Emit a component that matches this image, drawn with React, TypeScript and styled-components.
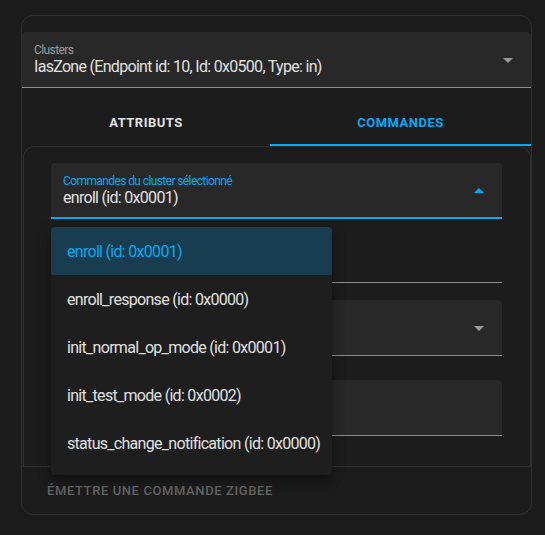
import React from "react";
import styled, {createGlobalStyle} from "styled-components";

const Global = createGlobalStyle`
  body {
    margin: 0;
    background: #1c1c1c;
    font-family: Roboto, "Noto Sans", sans-serif;
    color: #e1e1e1;
  }
`

const Page = styled.div`
  padding: 15px 13px 20px 21px;
`

const Card = styled.div`
  width: 511px;
  box-sizing: border-box;
  border: 1px solid #2f2f2f;
  border-radius: 12px;
  background: #1c1c1c;
  padding-top: 16px;
`

const Field = styled.div<{filled?: boolean; focused?: boolean; top?: number}>`
  position: relative;
  height: 56px;
  box-sizing: border-box;
  margin-top: ${props => props.top || 0}px;
  padding: 11px 40px 0 12px;
  background: ${props => props.filled ? '#282828' : 'transparent'};
  border-radius: 4px 4px 0 0;
  border-bottom: ${props => props.focused ? '2px solid #03a9f4' : '1px solid #8c8c8c'};
  display: flex;
  flex-direction: column;
`

const Label = styled.div<{focused?: boolean}>`
  font-size: 12px;
  line-height: 14px;
  letter-spacing: -0.6px;
  color: ${props => props.focused ? '#03a9f4' : '#9b9b9b'};
`

const Value = styled.div`
  font-size: 16px;
  line-height: 20px;
  letter-spacing: -0.7px;
  color: #e1e1e1;
  white-space: nowrap;
`

const Arrow = styled.span<{up?: boolean; focused?: boolean}>`
  position: absolute;
  right: 18px;
  top: ${props => props.up ? 25 : 26}px;
  width: 0;
  height: 0;
  border-left: 5px solid transparent;
  border-right: 5px solid transparent;
  ${props => props.up
    ? `border-bottom: 5px solid ${props.focused ? '#03a9f4' : '#9b9b9b'};`
    : `border-top: 5px solid #9b9b9b;`}
`

const Tabs = styled.div`
  display: flex;
  height: 58px;
`

const Tab = styled.div<{active?: boolean; width?: number}>`
  ${props => props.width ? `width: ${props.width}px;` : 'flex: 1;'}
  display: flex;
  align-items: center;
  justify-content: center;
  padding-top: 12px;
  font-size: 13px;
  font-weight: 700;
  letter-spacing: 0.5px;
  text-transform: uppercase;
  color: ${props => props.active ? '#03a9f4' : '#e1e1e1'};
  border-bottom: 2px solid ${props => props.active ? '#03a9f4' : 'transparent'};
  box-sizing: border-box;
`

const Inner = styled.div`
  margin-left: 1px;
  border: 1px solid #2f2f2f;
  border-bottom: none;
  border-radius: 12px 12px 0 0;
  padding: 16px 28px 30px 27px;
`

const Menu = styled.ul`
  position: absolute;
  z-index: 2;
  top: 64px;
  left: 0;
  width: 281px;
  margin: 0;
  padding: 0 0 8px;
  list-style: none;
  background: #1e1e1e;
  border-radius: 4px;
  box-shadow: 0 5px 5px -3px rgba(0, 0, 0, 0.2), 0 8px 10px 1px rgba(0, 0, 0, 0.14), 0 3px 14px 2px rgba(0, 0, 0, 0.12);
`

const Item = styled.li<{selected?: boolean}>`
  height: 48px;
  display: flex;
  align-items: center;
  padding-left: 16px;
  font-size: 16px;
  letter-spacing: -0.7px;
  white-space: nowrap;
  color: ${props => props.selected ? '#03a9f4' : '#e1e1e1'};
  background: ${props => props.selected ? '#183d50' : 'transparent'};
  border-radius: ${props => props.selected ? '4px 4px 0 0' : '0'};
`

const Actions = styled.div`
  border-top: 1px solid #2f2f2f;
  height: 47px;
  display: flex;
  align-items: center;
  padding-left: 25px;
`

const Button = styled.button`
  background: none;
  border: none;
  padding: 0;
  font-family: Roboto, sans-serif;
  font-size: 13px;
  font-weight: 500;
  letter-spacing: 0.6px;
  text-transform: uppercase;
  color: #636363;
`

const commands = [
  "enroll (id: 0x0001)",
  "enroll_response (id: 0x0000)",
  "init_normal_op_mode (id: 0x0001)",
  "init_test_mode (id: 0x0002)",
  "status_change_notification (id: 0x0000)",
]

export default function App() {
  return (
    <Page>
      <Global/>
      <Card>
        <Field filled>
          <Label>Clusters</Label>
          <Value>IasZone (Endpoint id: 10, Id: 0x0500, Type: in)</Value>
          <Arrow/>
        </Field>
        <Tabs>
          <Tab width={248}>Attributs</Tab>
          <Tab active>Commandes</Tab>
        </Tabs>
        <Inner>
          <Field filled focused>
            <Label focused>Commandes du cluster sélectionné</Label>
            <Value>enroll (id: 0x0001)</Value>
            <Arrow up focused/>
            <Menu>
              {commands.map((c, i) => (
                <Item key={c} selected={i === 0}>{c}</Item>
              ))}
            </Menu>
          </Field>
          <Field top={8}/>
          <Field filled top={17}>
            <Arrow/>
          </Field>
          <Field filled top={24}/>
        </Inner>
        <Actions>
          <Button disabled>Émettre une commande Zigbee</Button>
        </Actions>
      </Card>
    </Page>
  )
}
